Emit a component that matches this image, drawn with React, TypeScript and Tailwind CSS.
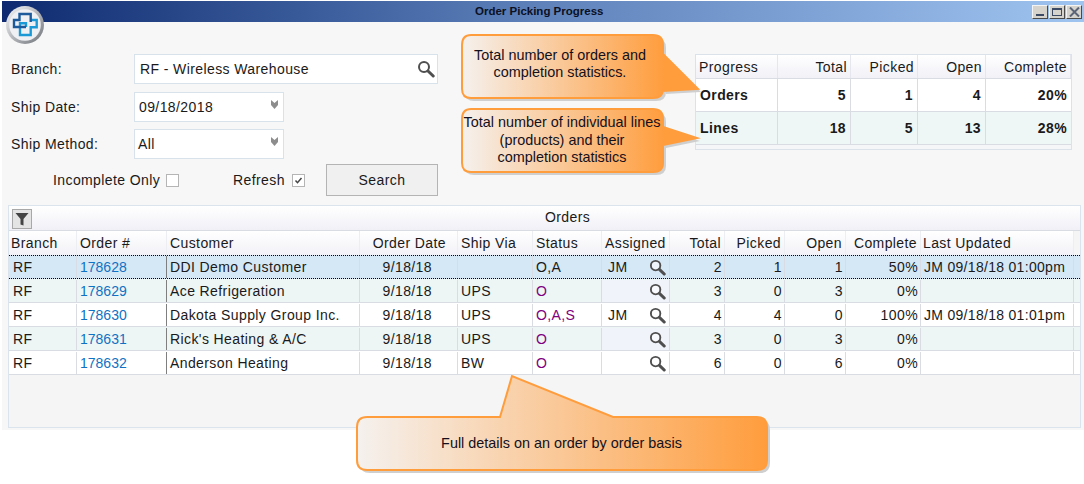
const font = { fontFamily: '"Liberation Sans", Arial, sans-serif' };

const gridCols = 'grid grid-cols-[68px_90px_193px_98px_75px_69px_68px_55px_60px_61px_75px_153px]';

const columns = [
  { name: 'Branch', cls: 'pl-[2px]' },
  { name: 'Order #', cls: 'pl-[3px]' },
  { name: 'Customer', cls: 'pl-[3px]' },
  { name: 'Order Date', cls: 'justify-end pr-[11px]' },
  { name: 'Ship Via', cls: 'pl-[3px]' },
  { name: 'Status', cls: 'pl-[3px]' },
  { name: 'Assigned', cls: 'pl-[3px]' },
  { name: 'Total', cls: 'justify-end pr-[3px]' },
  { name: 'Picked', cls: 'justify-end pr-[3px]' },
  { name: 'Open', cls: 'justify-end pr-[3px]' },
  { name: 'Complete', cls: 'justify-end pr-[3px]' },
  { name: 'Last Updated', cls: 'pl-[2px]' },
];

const orders = [
  { no: '178628', customer: 'DDI Demo Customer', via: '', status: 'O,A', who: 'JM', total: 2, picked: 1, open: 1, pct: '50%', updated: 'JM 09/18/18 01:00pm' },
  { no: '178629', customer: 'Ace Refrigeration', via: 'UPS', status: 'O', who: '', total: 3, picked: 0, open: 3, pct: '0%', updated: '' },
  { no: '178630', customer: 'Dakota Supply Group Inc.', via: 'UPS', status: 'O,A,S', who: 'JM', total: 4, picked: 4, open: 0, pct: '100%', updated: 'JM 09/18/18 01:01pm' },
  { no: '178631', customer: "Rick's Heating & A/C", via: 'UPS', status: 'O', who: '', total: 3, picked: 0, open: 3, pct: '0%', updated: '' },
  { no: '178632', customer: 'Anderson Heating', via: 'BW', status: 'O', who: '', total: 6, picked: 0, open: 6, pct: '0%', updated: '' },
];

const Lens = ({ size = 18 }: { size?: number }) => (
  <svg width={size} height={size} viewBox="0 0 18 18" fill="none">
    <circle cx="7" cy="7" r="5" stroke="#4f4f4f" strokeWidth="2" fill="#fff" fillOpacity="0.6" />
    <path d="M11 11l5.2 5" stroke="#4f4f4f" strokeWidth="3" strokeLinecap="round" />
  </svg>
);

const DropArrow = () => (
  <svg width="7" height="10" viewBox="0 0 7 10">
    <path d="M0 0l3.5 3 3.5-3v5l-3.5 4-3.5-4z" fill="#8d8d8d" />
  </svg>
);

const Logo = () => (
  <svg width="40" height="40" viewBox="0 0 40 40">
    <defs>
      <linearGradient id="ring" x1="0" y1="0" x2="1" y2="1">
        <stop offset="0" stopColor="#fafafa" />
        <stop offset="0.5" stopColor="#b4b7bc" />
        <stop offset="1" stopColor="#6f7277" />
      </linearGradient>
    </defs>
    <circle cx="20" cy="20" r="19" fill="url(#ring)" />
    <circle cx="20" cy="20" r="15.8" fill="#eef0f3" />
    <path d="M25.7 15H31.7V22.3H25.7V30H15V18.3H21V22" fill="none" stroke="#1b98d6" strokeWidth="2.4" />
    <path d="M21 22H9V15H14.5V9H25.7V17" fill="none" stroke="#1d5a9c" strokeWidth="2.4" />
  </svg>
);

const Callout = ({ id, cls, w, h, d, x1, x2, children }: { id: string; cls: string; w: number; h: number; d: string; x1: number; x2: number; children: React.ReactNode }) => (
  <div className={`absolute tracking-normal text-[14.4px] text-[#14101c] ${cls}`} style={{ width: w, height: h }}>
    <svg width={w} height={h} className="absolute left-0 top-0">
      <defs>
        <linearGradient id={id} gradientUnits="userSpaceOnUse" x1={x1} y1="0" x2={x2} y2="0">
          <stop offset="0" stopColor="#f5f1ee" />
          <stop offset="1" stopColor="#ff9d3d" />
        </linearGradient>
      </defs>
      <path d={d} fill="#cfcfcf" transform="translate(3 3)" />
      <path d={d} fill={`url(#${id})`} stroke="#ff9d3d" strokeWidth="2" />
    </svg>
    {children}
  </div>
);

const Field = ({ label, width, value, pad, arrow }: { label: string; width: string; value: string; pad: string; arrow?: boolean }) => (
  <div className="flex items-center">
    <div className="w-[123px]">{label}</div>
    <div className={`${width} ${pad} h-[30px] flex items-center justify-between bg-white border border-[#d8e2ea]`}>
      <span>{value}</span>
      {arrow ? <span className="flex mr-[3px] mb-[5px]"><DropArrow /></span> : <span className="flex mr-[1px]"><Lens /></span>}
    </div>
  </div>
);

const Check = ({ checked }: { checked?: boolean }) => (
  <div className="w-[13px] h-[13px] bg-white border border-[#b5b5b5] flex items-center justify-center">
    {checked && (
      <svg width="9" height="9" viewBox="0 0 9 9"><path d="M1.5 4.5l2 2.2L7.5 2" fill="none" stroke="#444" strokeWidth="1.5" /></svg>
    )}
  </div>
);

const WinButton = ({ kind }: { kind: 'min' | 'max' | 'close' }) => (
  <div className="w-[16px] h-[14px] bg-[#d6d3cc] border border-t-[#f4f4f4] border-l-[#f4f4f4] border-r-[#4a4a4a] border-b-[#4a4a4a] flex items-center justify-center">
    {kind === 'min' && <div className="w-[8px] h-[2px] bg-[#3c4a63] mt-[7px]" />}
    {kind === 'max' && <div className="w-[10px] h-[8px] border border-[#3c4a63] border-t-2" />}
    {kind === 'close' && (
      <svg width="11" height="10" viewBox="0 0 11 10"><path d="M1 0.5l9 9M10 0.5l-9 9" stroke="#5a6478" strokeWidth="2" /></svg>
    )}
  </div>
);

const statHead = 'flex items-center justify-end pr-[3px] pt-[1px] border-r border-[#e4e8ee] bg-gradient-to-b from-white to-[#f1f1f7]';

const StatRow = ({ name, nums, alt }: { name: string; nums: string[]; alt?: boolean }) => (
  <div className={`grid grid-cols-[82px_73px_67px_68px_1fr] h-[33px] border-b border-[#d9dde3] font-bold ${alt ? 'bg-[#eff7f6]' : 'bg-white'}`}>
    <div className="flex items-center pl-[4px] border-r border-[#d9dde3]">{name}</div>
    {nums.map((n, i) => (
      <div key={i} className="flex items-center justify-end pr-[4px] border-r border-[#d9dde3] last:border-r-0">{n}</div>
    ))}
  </div>
);

export default function App() {
  return (
    <div className="relative w-[1084px] h-[484px] bg-white pl-[2px] pt-[1px] overflow-hidden text-[#1a1a1a] text-[14px] tracking-[0.4px]" style={font}>
      <div className="h-[21px] flex items-center justify-between bg-gradient-to-r from-[#0f2a70] via-[#5f82bb] to-[#a0c4f0]">
        <div className="ml-[473px] text-[11.5px] font-bold text-[#0b1024] tracking-normal">Order Picking Progress</div>
        <div className="flex gap-px mr-[2px]">
          <WinButton kind="min" />
          <WinButton kind="max" />
          <WinButton kind="close" />
        </div>
      </div>

      <div className="h-[408px] bg-[#f7f7f7] px-[6px]">
        <div className="h-[183px] flex">
          <div className="w-[430px] pt-[32px] pl-[3px] flex flex-col">
            <Field label="Branch:" width="w-[304px]" value="RF - Wireless Warehouse" pad="pl-[5px] pr-[1px]" />
            <div className="mt-[8px]">
              <Field label="Ship Date:" width="w-[150px]" value="09/18/2018" pad="pl-[4px] pr-[2px]" arrow />
            </div>
            <div className="mt-[7px]">
              <Field label="Ship Method:" width="w-[150px]" value="All" pad="pl-[3px] pr-[2px]" arrow />
            </div>
            <div className="mt-[5px] flex items-center">
              <span className="ml-[42px] w-[113px]">Incomplete Only</span>
              <Check />
              <span className="ml-[54px] w-[59px]">Refresh</span>
              <Check checked />
              <button className="ml-[21px] w-[112px] h-[32px] bg-[#f0f0f0] border border-[#b4b4b4]">Search</button>
            </div>
          </div>

          <div className="ml-[257px] mt-[32px] w-[377px] h-[96px] border border-[#dbe2ea] bg-[#f5f6f7] self-start">
            <div className="grid grid-cols-[82px_73px_67px_68px_1fr] h-[24px] border-b border-[#d9dde3]">
              <div className={`${statHead} justify-start pl-[3px]`}>Progress</div>
              <div className={statHead}>Total</div>
              <div className={statHead}>Picked</div>
              <div className={statHead}>Open</div>
              <div className={statHead}>Complete</div>
            </div>
            <StatRow name="Orders" nums={['5', '1', '4', '20%']} />
            <StatRow name="Lines" nums={['18', '5', '13', '28%']} alt />
          </div>
        </div>

        <div className="h-[223px] w-[1073px] border border-[#dbe4ec] bg-[#f5f5f5]">
          <div className="relative h-[25px] flex items-center justify-center pl-[46px] pb-[2px] bg-gradient-to-b from-white to-[#f1f0f7] border-b border-[#d9dde3]">
            <div className="absolute left-[3px] top-[3px] w-[20px] h-[20px] bg-[#e4e4e4] border border-[#a8a8a8] flex items-center justify-center">
              <svg width="14" height="14" viewBox="0 0 14 14"><path d="M0.5 1h13L8.5 7v6.5l-3-1V7z" fill="#444" /></svg>
            </div>
            <span>Orders</span>
          </div>

          <div className={`${gridCols} h-[24px]`}>
            {columns.map(c => (
              <div key={c.name} className={`flex items-center border-r border-[#eceef2] bg-gradient-to-b from-white to-[#f2f1f7] ${c.cls}`}>{c.name}</div>
            ))}
          </div>

          {orders.map((o, i) => {
            const selected = i === 0;
            const bg = selected ? 'bg-[#d5e8f6]' : i % 2 === 1 ? 'bg-[#eef6f5]' : 'bg-white';
            const line = 'border-r border-[#d9dde3]';
            return (
              <div key={o.no} className={`${gridCols} h-[24px] ${bg} ${selected ? 'border-y border-dotted border-black' : 'border-b border-[#d9dde3] pt-[1px]'}`}>
                <div className={`flex items-center pl-[4px] ${line}`}>RF</div>
                <div className="flex items-center pl-[3px] text-[#0f72c4] tracking-normal border-r border-[#7f7f7f]">{o.no}</div>
                <div className={`flex items-center pl-[3px] ${line}`}>{o.customer}</div>
                <div className={`flex items-center justify-end pr-[25px] ${line}`}>9/18/18</div>
                <div className={`flex items-center pl-[3px] ${line}`}>{o.via}</div>
                <div className={`flex items-center pl-[3px] ${line} ${selected ? '' : 'text-[#800080]'}`}>{o.status}</div>
                <div className={`flex items-center justify-between pl-[6px] pr-[3px] ${line} ${i === 1 || i === 3 ? 'bg-[#f1f3fa]' : ''}`}>
                  <span>{o.who}</span>
                  <Lens size={17} />
                </div>
                <div className={`flex items-center justify-end pr-[2px] ${line}`}>{o.total}</div>
                <div className={`flex items-center justify-end pr-[2px] ${line}`}>{o.picked}</div>
                <div className={`flex items-center justify-end pr-[2px] ${line}`}>{o.open}</div>
                <div className={`flex items-center justify-end pr-[2px] ${line}`}>{o.pct}</div>
                <div className={`flex items-center pl-[3px] ${line} whitespace-nowrap tracking-[0.3px]`}>{o.updated}</div>
              </div>
            );
          })}
        </div>
      </div>

      <div className="absolute left-[5px] top-[5px]"><Logo /></div>

      <Callout id="c1" cls="left-[458px] top-[31px]" w={246} h={74} x1={4} x2={206} d="M13 4H195Q205 4 205 14V23L240 58 205 60V58Q205 67 195 67H13Q4 67 4 58V14Q4 4 13 4Z">
        <div className="absolute left-[2px] top-[16px] w-[200px] text-center leading-[17px]">Total number of orders and<br />completion statistics.</div>
      </Callout>
      <Callout id="c2" cls="left-[458px] top-[105px]" w={246} h={74} x1={4} x2={206} d="M13 4H195Q205 4 205 14V22L239 33 205 40V58Q205 67 195 67H13Q4 67 4 58V14Q4 4 13 4Z">
        <div className="absolute left-[0px] top-[9px] w-[208px] text-center leading-[17.5px] whitespace-nowrap">Total number of individual lines<br />(products) and their<br />completion statistics</div>
      </Callout>
      <Callout id="c3" cls="left-[353px] top-[372px]" w={424} h={106} x1={5} x2={414} d="M14 45H147L159 4 260 45H404Q414 45 414 55V88Q414 98 404 98H14Q4 98 4 88V55Q4 45 14 45Z">
        <div className="absolute left-[3px] top-[63px] w-[411px] text-center leading-[17px]">Full details on an order by order basis</div>
      </Callout>
    </div>
  );
}
